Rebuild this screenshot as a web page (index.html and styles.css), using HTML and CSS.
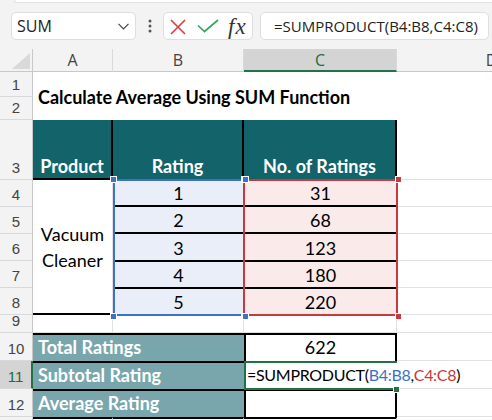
FILE: index.html
```html
<!DOCTYPE html>
<html lang="en">
<head>
    <meta charset="UTF-8">
    <title>SUMPRODUCT</title>
    <link rel="stylesheet" href="styles.css">
</head>
<body>
    <div class="toolbar">
        <div class="ribbon-edge"></div>
        <div class="formula-row">
            <div class="name-box">
                <span>SUM</span>
                <svg width="11" height="7" viewBox="0 0 11 7"><polyline points="0.5,0.8 5.5,5.8 10.5,0.8" fill="none" stroke="#444" stroke-width="1.2"/></svg>
            </div>
            <div class="dots">
                <svg width="4" height="14" viewBox="0 0 4 14"><circle cx="2" cy="2" r="1.5" fill="#555"/><circle cx="2" cy="7" r="1.5" fill="#555"/><circle cx="2" cy="12" r="1.5" fill="#555"/></svg>
            </div>
            <div class="fx-box">
                <svg class="icon-cancel" width="16" height="16" viewBox="0 0 16 16"><path d="M1 1 L15 15 M15 1 L1 15" stroke="#e2383e" stroke-width="1.6" fill="none"/></svg>
                <svg class="icon-enter" width="22" height="14" viewBox="0 0 22 14"><polyline points="1,6.5 7.5,12.5 21,1" fill="none" stroke="#3aa55c" stroke-width="1.7"/></svg>
                <span class="fx">fx</span>
            </div>
            <div class="formula-box">=SUMPRODUCT(B4:B8,C4:C8)</div>
        </div>
    </div>

    <div class="sheet">
        <!-- column headers -->
        <div class="corner">
            <svg width="18" height="16" viewBox="0 0 18 16"><polygon points="18,0 18,16 0,16" fill="#d9d9d9"/></svg>
        </div>
        <div class="col-head">A</div>
        <div class="col-head">B</div>
        <div class="col-head active">C</div>
        <div class="col-head">D</div>

        <!-- rows 1-2 -->
        <div class="row-head">1</div>
        <div class="title">Calculate Average Using SUM Function</div>
        <div class="row-head">2</div>

        <!-- row 3 -->
        <div class="row-head">3</div>
        <div class="cell head first">Product</div>
        <div class="cell head">Rating</div>
        <div class="cell head">No. of Ratings</div>
        <div class="cell"></div>

        <!-- rows 4-8 -->
        <div class="row-head">4</div>
        <div class="cell product">Vacuum<br>Cleaner</div>
        <div class="range range-blue">
            <div class="cell rating">1</div>
            <div class="cell rating">2</div>
            <div class="cell rating">3</div>
            <div class="cell rating">4</div>
            <div class="cell rating last">5</div>
            <span class="handle tl"></span>
            <span class="handle tr"></span>
            <span class="handle bl"></span>
            <span class="handle br"></span>
        </div>
        <div class="range range-red">
            <div class="cell count">31</div>
            <div class="cell count">68</div>
            <div class="cell count">123</div>
            <div class="cell count">180</div>
            <div class="cell count last">220</div>
            <span class="handle tl"></span>
            <span class="handle tr"></span>
            <span class="handle bl"></span>
            <span class="handle br"></span>
        </div>
        <div class="cell"></div>
        <div class="row-head">5</div>
        <div class="cell"></div>
        <div class="row-head">6</div>
        <div class="cell"></div>
        <div class="row-head">7</div>
        <div class="cell"></div>
        <div class="row-head">8</div>
        <div class="cell"></div>

        <!-- row 9 -->
        <div class="row-head">9</div>
        <div class="cell"></div>
        <div class="cell"></div>
        <div class="cell"></div>
        <div class="cell"></div>

        <!-- rows 10-12 -->
        <div class="row-head">10</div>
        <div class="cell label">Total Ratings</div>
        <div class="cell value">622</div>
        <div class="cell"></div>

        <div class="row-head active">11</div>
        <div class="cell label">Subtotal Rating</div>
        <div class="cell value editing">=SUMPRODUCT(<span class="ref-blue">B4:B8</span>,<span class="ref-red">C4:C8</span>)<span class="handle br"></span></div>
        <div class="cell no-grid"></div>

        <div class="row-head">12</div>
        <div class="cell label">Average Rating</div>
        <div class="cell value"></div>
        <div class="cell"></div>

        <!-- row 13, only its top edge is in view -->
        <div class="row-head"></div>
        <div class="cell closing"></div>
        <div class="cell closing"></div>
        <div class="cell closing"></div>
        <div class="cell"></div>
    </div>
</body>
</html>
```

FILE: styles.css
```css
body {
    margin: 0;
    font-family: 'Open Sans', 'Noto Sans', sans-serif;
    background: #fff;
    overflow: hidden;
}

/* formula bar */
.toolbar {
    height: 49px;
    background: #f3f3f3;
}
.ribbon-edge {
    height: 2px;
    margin-left: 14px;
    background: #fff;
    border: 1px solid #e2e2e2;
    border-top: none;
    border-right: none;
    border-radius: 0 0 0 5px;
}
.formula-row {
    display: flex;
    align-items: center;
    margin-top: 9px;
    padding-left: 11px;
}
.name-box,
.fx-box,
.formula-box {
    height: 28px;
    box-sizing: border-box;
    background: #fff;
    border: 1px solid #dedede;
    border-radius: 5px;
    display: flex;
    align-items: center;
}
.name-box {
    width: 125px;
    justify-content: space-between;
    padding: 0 6px 0 5px;
    font-size: 16px;
    color: #222;
}
.dots {
    width: 27px;
    display: flex;
    justify-content: center;
}
.dots svg {
    display: block;
}
.fx-box {
    width: 90px;
    padding-left: 6px;
}
.icon-cancel {
    margin-top: 1px;
}
.icon-enter {
    margin-left: 11px;
}
.fx {
    margin-left: 9px;
    font-family: 'Liberation Serif', serif;
    font-style: italic;
    font-size: 23px;
    line-height: 1;
    color: #333;
    letter-spacing: 1px;
}
.formula-box {
    width: 229px;
    margin-left: 7px;
    padding-left: 13px;
    font-size: 15px;
    color: #222;
    white-space: nowrap;
    overflow: hidden;
}

/* sheet */
.sheet {
    display: grid;
    grid-template-columns: 33px 80px 131px 153px 190px;
    grid-template-rows: 23px 25px 23px 60px repeat(5, 27px) 18px repeat(3, 28px) 1fr;
    height: 371px;
    overflow: hidden;
}
.sheet > div {
    box-sizing: border-box;
}
.corner {
    background: #f3f3f3;
    border-right: 1px solid #c8c8c8;
    border-bottom: 1px solid #c8c8c8;
    display: flex;
    align-items: flex-end;
    justify-content: flex-end;
    padding: 0 2px 2px 0;
}
.corner svg {
    display: block;
}
.col-head {
    background: #f3f3f3;
    border-right: 1px solid #d9d9d9;
    border-bottom: 1px solid #c8c8c8;
    display: flex;
    align-items: center;
    justify-content: center;
    font-size: 16px;
    color: #444;
}
.col-head.active {
    background: #d4d4d4;
    color: #1d6b40;
    border-bottom: 2px solid #217346;
}
.row-head {
    background: #f3f3f3;
    border-right: 1px solid #c8c8c8;
    border-bottom: 1px solid #d9d9d9;
    display: flex;
    align-items: flex-end;
    justify-content: center;
    font-family: 'Liberation Sans', Arial, sans-serif;
    font-size: 15px;
    line-height: 12px;
    padding-bottom: 5px;
    color: #444;
}
.row-head.active {
    background: #d4d4d4;
    color: #1d6b40;
    border-right: 2px solid #217346;
}
.title {
    grid-column: span 4;
    grid-row: span 2;
    display: flex;
    align-items: center;
    padding: 1px 0 0 5px;
    font-family: Lato, sans-serif;
    font-weight: bold;
    font-size: 18px;
    color: #000;
}
.cell {
    border-right: 1px solid #e1e1e1;
    border-bottom: 1px solid #e1e1e1;
    display: flex;
    align-items: flex-end;
    justify-content: center;
    font-family: Lato, sans-serif;
    font-size: 18px;
    line-height: 1;
    padding-bottom: 5px;
    color: #000;
    white-space: nowrap;
}
.cell.head {
    background: #12646a;
    color: #fff;
    font-weight: bold;
    border-bottom: none;
    border-right: 2px solid #000;
    padding-bottom: 5px;
}
.cell.head.first {
    border-bottom: 2px solid #000;
    padding-bottom: 3px;
}
.cell.product {
    grid-row: span 5;
    align-items: center;
    text-align: center;
    line-height: 26px;
    padding: 0;
    border-bottom: 2px solid #000;
    white-space: normal;
}

/* reference ranges */
.range {
    grid-row: span 5;
    display: flex;
    flex-direction: column;
    position: relative;
}
.range .cell {
    flex: 1;
    box-sizing: border-box;
    border-right: none;
    border-bottom: 2px solid #000;
    padding-bottom: 3px;
}
.range .cell.last {
    border-bottom: none;
    padding-bottom: 4px;
}
.range-blue .cell {
    background: #eaeef8;
}
.range-red .cell {
    background: #faeaea;
}
.range::before {
    content: "";
    position: absolute;
    top: -1px;
    left: 0;
    right: -1px;
    bottom: -1px;
    border: 2px solid;
    z-index: 1;
}
.range-blue::before {
    border-color: #3f72c7;
}
.range-red::before {
    border-color: #c8393f;
    left: -1px;
}
.range-red {
    z-index: 2;
}
.handle {
    position: absolute;
    width: 5px;
    height: 5px;
    border: 1px solid #fff;
    z-index: 3;
}
.range-blue .handle {
    background: #3f72c7;
}
.range-red .handle {
    background: #c8393f;
}
.handle.tl { top: -4px; left: -3px; }
.handle.tr { top: -4px; right: -5px; }
.handle.bl { bottom: -5px; left: -3px; }
.handle.br { bottom: -5px; right: -5px; }

/* summary block */
.cell.label {
    grid-column: span 2;
    background: #79a6ad;
    color: #fff;
    font-weight: bold;
    justify-content: flex-start;
    padding-left: 5px;
    border-top: 2px solid #000;
    border-right: none;
    border-bottom: none;
}
.cell.value {
    border-top: 2px solid #000;
    border-left: 2px solid #000;
    border-right: 2px solid #000;
    border-bottom: none;
}
.cell.editing {
    position: relative;
    z-index: 2;
    justify-content: flex-start;
    padding-left: 1px;
    border-right: none;
    font-size: 16px;
    letter-spacing: -0.3px;
    padding-bottom: 6px;
    overflow: visible;
}
.cell.editing::after {
    content: "";
    position: absolute;
    top: -2px;
    left: -2px;
    right: 0;
    bottom: -1px;
    border: 2px solid #217346;
    border-right: none;
}
.cell.editing .handle {
    background: #217346;
    bottom: -4px;
    right: -3px;
}
.ref-blue {
    color: #3e6fc6;
}
.ref-red {
    color: #c9383e;
}
.cell.no-grid {
    border-right: none;
}
.cell.closing {
    border-top: 2px solid #000;
}
```
